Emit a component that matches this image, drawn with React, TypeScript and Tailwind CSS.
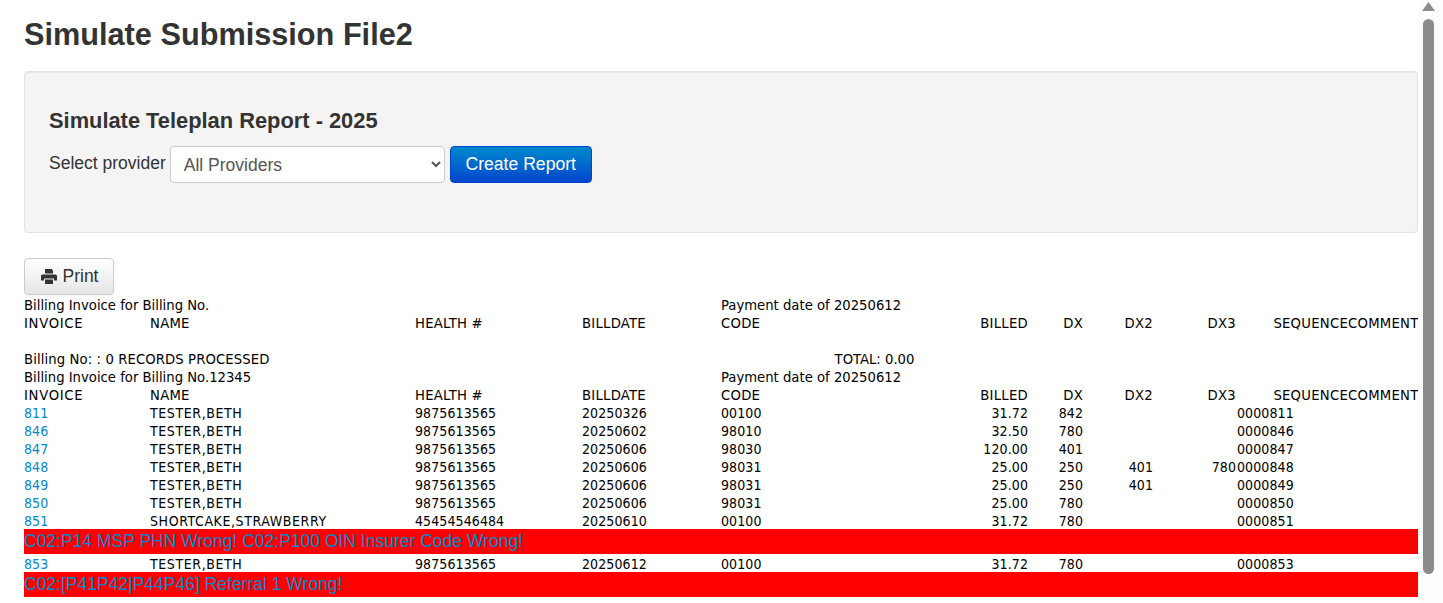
type Row = {
  invoice: string;
  name: string;
  health: string;
  date: string;
  code: string;
  billed: string;
  dx: string;
  dx2?: string;
  dx3?: string;
  seq: string;
  error?: string;
};

const rows: Row[] = [
  { invoice: "811", name: "TESTER,BETH", health: "9875613565", date: "20250326", code: "00100", billed: "31.72", dx: "842", seq: "0000811" },
  { invoice: "846", name: "TESTER,BETH", health: "9875613565", date: "20250602", code: "98010", billed: "32.50", dx: "780", seq: "0000846" },
  { invoice: "847", name: "TESTER,BETH", health: "9875613565", date: "20250606", code: "98030", billed: "120.00", dx: "401", seq: "0000847" },
  { invoice: "848", name: "TESTER,BETH", health: "9875613565", date: "20250606", code: "98031", billed: "25.00", dx: "250", dx2: "401", dx3: "780", seq: "0000848" },
  { invoice: "849", name: "TESTER,BETH", health: "9875613565", date: "20250606", code: "98031", billed: "25.00", dx: "250", dx2: "401", seq: "0000849" },
  { invoice: "850", name: "TESTER,BETH", health: "9875613565", date: "20250606", code: "98031", billed: "25.00", dx: "780", seq: "0000850" },
  { invoice: "851", name: "SHORTCAKE,STRAWBERRY", health: "45454546484", date: "20250610", code: "00100", billed: "31.72", dx: "780", seq: "0000851", error: "C02:P14 MSP PHN Wrong! C02:P100 OIN Insurer Code Wrong!" },
  { invoice: "853", name: "TESTER,BETH", health: "9875613565", date: "20250612", code: "00100", billed: "31.72", dx: "780", seq: "0000853", error: "C02:[P41P42|P44P46] Referral 1 Wrong!" },
];

function HeaderRow() {
  return (
    <tr className="h-[18px] tracking-[0.25px] [&>td]:pt-px">
      <td className="tracking-[0.7px]">INVOICE</td>
      <td>NAME</td>
      <td>HEALTH #</td>
      <td>BILLDATE</td>
      <td>CODE</td>
      <td className="text-right">BILLED</td>
      <td className="text-right">DX</td>
      <td className="text-right">DX2</td>
      <td className="text-right">DX3</td>
      <td className="text-right">SEQUENCE</td>
      <td className="text-right">COMMENT</td>
    </tr>
  );
}

function TitleRow({ billingNo }: { billingNo: string }) {
  return (
    <tr className="h-[18px] [&>td]:pt-px">
      <td colSpan={4}>Billing Invoice for Billing No.{billingNo}</td>
      <td colSpan={7}>Payment date of 20250612</td>
    </tr>
  );
}

function PrintIcon() {
  return (
    <svg viewBox="0 0 16 15" className="h-[15px] w-[16px] fill-[#333333]">
      <path d="M4 0 H10.5 L12 1.5 V4.5 H4 Z" />
      <path d="M1.5 5.5 H14.5 Q16 5.5 16 7 V11.5 H13 V9.5 H3 V11.5 H0 V7 Q0 5.5 1.5 5.5 Z" />
      <path d="M4 10.5 H12 V15 H4 Z" />
    </svg>
  );
}

export default function App() {
  return (
    <div className="flex h-[603px] overflow-hidden bg-white font-['Liberation_Sans',sans-serif] text-[#333333]">
      <main className="w-[1418px] shrink-0 pl-[24px]">
        <h1 className="mt-[17px] text-[30.7px] leading-[35px] font-bold">Simulate Submission File2</h1>

        <section className="mt-[19px] h-[162px] w-[1394px] rounded-[4px] border border-[#e3e3e3] bg-[#f4f4f4] pt-[36px] pl-[24px] shadow-[inset_0_1px_1px_rgba(0,0,0,0.05)]">
          <h2 className="text-[21.85px] leading-[26px] font-bold">Simulate Teleplan Report - 2025</h2>
          <div className="mt-[12px] flex items-start">
            <label className="mt-[5px] text-[17.5px] leading-[24px]">Select provider</label>
            <select className="ml-[4px] h-[37px] w-[275px] rounded-[4px] border border-[#cccccc] bg-white pl-[9px] text-[17.5px] text-[#555555]">
              <option>All Providers</option>
            </select>
            <button className="ml-[5px] h-[37px] w-[142px] rounded-[4px] border border-[#0044cc] bg-gradient-to-b from-[#0088cc] to-[#0044cc] text-[17.6px] text-white">
              Create Report
            </button>
          </div>
        </section>

        <button className="mt-[25px] flex h-[37px] w-[90px] items-center justify-center gap-[6px] rounded-[4px] border border-[#cccccc] bg-gradient-to-b from-white to-[#e6e6e6] pl-[1px] text-[17.5px] shadow-[0_1px_2px_rgba(0,0,0,0.05)]">
          <PrintIcon />
          Print
        </button>

        <table className="w-[1394px] table-fixed border-collapse font-['DejaVu_Sans_Condensed','DejaVu_Sans',sans-serif] text-[14.7px] leading-[17px] text-black">
          <colgroup>
            <col className="w-[126px]" />
            <col className="w-[265px]" />
            <col className="w-[167px]" />
            <col className="w-[139px]" />
            <col className="w-[240px]" />
            <col className="w-[67px]" />
            <col className="w-[55px]" />
            <col className="w-[70px]" />
            <col className="w-[83px]" />
            <col className="w-[112px]" />
            <col className="w-[70px]" />
          </colgroup>
          <tbody>
            <TitleRow billingNo="" />
            <HeaderRow />
            <tr className="h-[18px] [&>td]:pt-px"><td colSpan={11}>&nbsp;</td></tr>
            <tr className="h-[18px] [&>td]:pt-px">
              <td colSpan={4} className="tracking-[0.1px]">Billing No: : 0 RECORDS PROCESSED</td>
              <td colSpan={2} className="text-center">TOTAL: 0.00</td>
              <td colSpan={5} />
            </tr>
            <TitleRow billingNo="12345" />
            <HeaderRow />
            {rows.map((row) => (
              <RowView key={row.invoice} row={row} />
            ))}
          </tbody>
        </table>
      </main>

      <aside className="flex w-[25px] shrink-0 flex-col items-start bg-[#fdfdfd] pl-[4px]">
        <svg viewBox="0 0 13 9" className="mt-[2px] h-[9px] w-[13px] fill-[#8b8b8b]">
          <path d="M6.5 0 L13 9 L0 9 Z" />
        </svg>
        <div className="mt-[8px] ml-[1px] h-[555px] w-[11px] rounded-full bg-[#8b8b8b]" />
      </aside>
    </div>
  );
}

function RowView({ row }: { row: Row }) {
  return (
    <>
      <tr className="h-[18px] text-[14px] leading-[16px] tracking-[0.1px] [&>td]:pt-[2px]">
        <td className="text-[#0088cc]">{row.invoice}</td>
        <td className="tracking-[0.6px]">{row.name}</td>
        <td>{row.health}</td>
        <td>{row.date}</td>
        <td>{row.code}</td>
        <td className="text-right">{row.billed}</td>
        <td className="text-right">{row.dx}</td>
        <td className="text-right">{row.dx2}</td>
        <td className="text-right">{row.dx3}</td>
        <td className="pl-px">{row.seq}</td>
        <td />
      </tr>
      {row.error && (
        <tr className="h-[25px] bg-[#ff0000]">
          <td colSpan={11} className="font-['Liberation_Sans',sans-serif] text-[17.5px] leading-[25px] text-[#0088cc]">
            {row.error}
          </td>
        </tr>
      )}
    </>
  );
}
